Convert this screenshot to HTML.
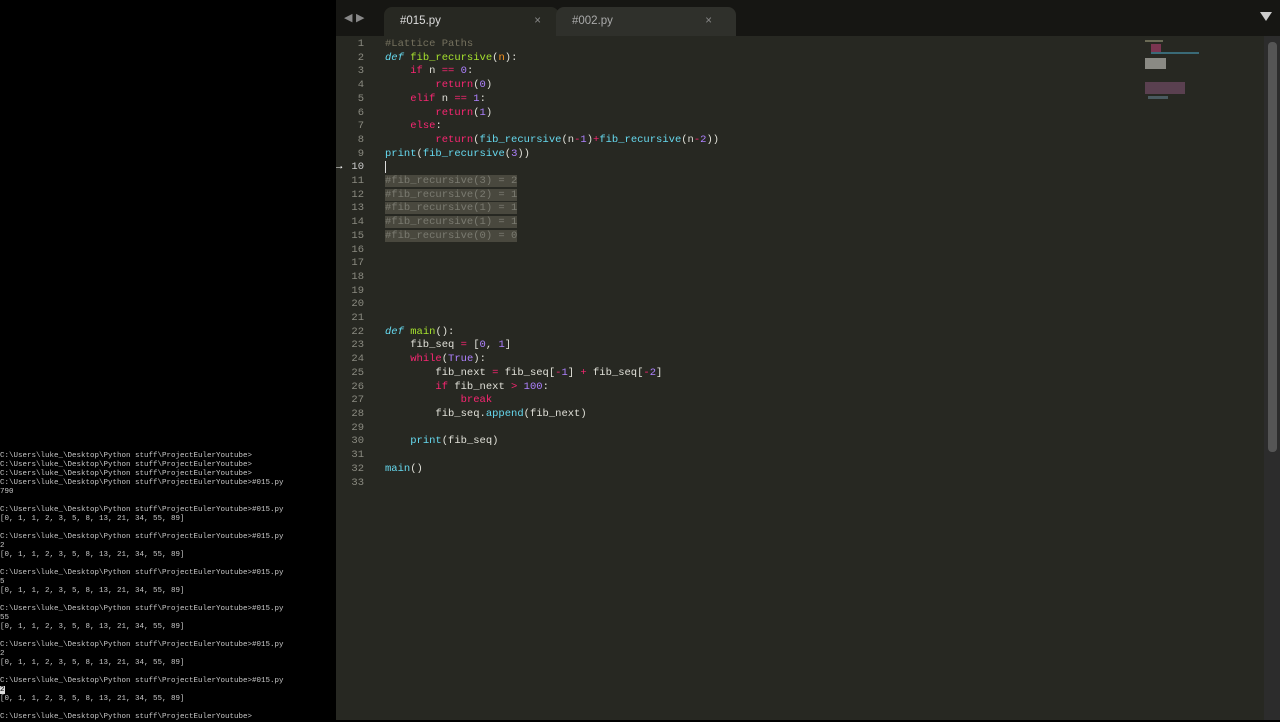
<!DOCTYPE html>
<html><head><style>
*{margin:0;padding:0;box-sizing:border-box}
body{width:1280px;height:720px;background:#000;position:relative;overflow:hidden;font-family:"Liberation Mono",monospace}
#term{position:absolute;left:0;top:452px;width:336px;font-size:7.5px;line-height:9px;color:#c8c8c8;white-space:pre}
#ed{position:absolute;left:336px;top:0;width:944px;height:720px;background:#272822}
#tabbar{position:absolute;left:0;top:0;width:944px;height:36px;background:#161613}
.tab{position:absolute;top:7px;height:29px;border-radius:8px 8px 0 0;font-family:"Liberation Sans",sans-serif;font-size:11.5px;line-height:28px;padding-left:16px}
#code{position:absolute;left:0;top:38px;font-size:10.5px;line-height:13.7px;white-space:pre;color:#e0e0d8}
.ln{display:inline-block;width:28px;text-align:right;color:#8a8a80;margin-right:21px}
.k{color:#f92672}.c{color:#66d9ef}.g{color:#a6e22e}.p{color:#ae81ff}.o{color:#fd971f}.m{color:#75715e}
.cy{color:#66d9ef;font-style:italic}
.sel{background:#49483e;color:#7a7a70}
</style></head><body>
<div id="term">C:\Users\luke_\Desktop\Python stuff\ProjectEulerYoutube>
C:\Users\luke_\Desktop\Python stuff\ProjectEulerYoutube>
C:\Users\luke_\Desktop\Python stuff\ProjectEulerYoutube>
C:\Users\luke_\Desktop\Python stuff\ProjectEulerYoutube>#015.py
790

C:\Users\luke_\Desktop\Python stuff\ProjectEulerYoutube>#015.py
[0, 1, 1, 2, 3, 5, 8, 13, 21, 34, 55, 89]

C:\Users\luke_\Desktop\Python stuff\ProjectEulerYoutube>#015.py
2
[0, 1, 1, 2, 3, 5, 8, 13, 21, 34, 55, 89]

C:\Users\luke_\Desktop\Python stuff\ProjectEulerYoutube>#015.py
5
[0, 1, 1, 2, 3, 5, 8, 13, 21, 34, 55, 89]

C:\Users\luke_\Desktop\Python stuff\ProjectEulerYoutube>#015.py
55
[0, 1, 1, 2, 3, 5, 8, 13, 21, 34, 55, 89]

C:\Users\luke_\Desktop\Python stuff\ProjectEulerYoutube>#015.py
2
[0, 1, 1, 2, 3, 5, 8, 13, 21, 34, 55, 89]

C:\Users\luke_\Desktop\Python stuff\ProjectEulerYoutube>#015.py
<span style="background:#ddd;color:#000">2</span>
[0, 1, 1, 2, 3, 5, 8, 13, 21, 34, 55, 89]

C:\Users\luke_\Desktop\Python stuff\ProjectEulerYoutube></div>
<div id="ed">
<div id="tabbar">
<div style="position:absolute;left:8px;top:11px;color:#888;font-size:11px;font-family:'DejaVu Sans',sans-serif">◀ ▶</div>
<div class="tab" style="left:48px;width:175px;background:#272822;color:#ddd">#015.py<span style="position:absolute;right:18px;color:#888">×</span></div>
<div class="tab" style="left:220px;width:180px;background:#2f302b;color:#aaa;padding-left:16px">#002.py<span style="position:absolute;right:24px;color:#888">×</span></div>
<div style="position:absolute;right:8px;top:12px;width:0;height:0;border-left:6px solid transparent;border-right:6px solid transparent;border-top:9px solid #ccc"></div>
</div>
<div id="code"><span class="ln">1</span><span class="m">#Lattice Paths</span>
<span class="ln">2</span><span class="cy">def</span> <span class="g">fib_recursive</span>(<span class="o">n</span>):
<span class="ln">3</span>    <span class="k">if</span> n <span class="k">==</span> <span class="p">0</span>:
<span class="ln">4</span>        <span class="k">return</span>(<span class="p">0</span>)
<span class="ln">5</span>    <span class="k">elif</span> n <span class="k">==</span> <span class="p">1</span>:
<span class="ln">6</span>        <span class="k">return</span>(<span class="p">1</span>)
<span class="ln">7</span>    <span class="k">else</span>:
<span class="ln">8</span>        <span class="k">return</span>(<span class="c">fib_recursive</span>(n<span class="k">-</span><span class="p">1</span>)<span class="k">+</span><span class="c">fib_recursive</span>(n<span class="k">-</span><span class="p">2</span>))
<span class="ln">9</span><span class="c">print</span>(<span class="c">fib_recursive</span>(<span class="p">3</span>))
<span style="position:absolute;left:0;width:48px;background:transparent"><span style="color:#fff">→</span></span><span class="ln" style="color:#ccc">10</span><span style="border-left:1px solid #ddd"></span>
<span class="ln">11</span><span class="sel">#fib_recursive(3) = 2</span>
<span class="ln">12</span><span class="sel">#fib_recursive(2) = 1</span>
<span class="ln">13</span><span class="sel">#fib_recursive(1) = 1</span>
<span class="ln">14</span><span class="sel">#fib_recursive(1) = 1</span>
<span class="ln">15</span><span class="sel">#fib_recursive(0) = 0</span>
<span class="ln">16</span>
<span class="ln">17</span>
<span class="ln">18</span>
<span class="ln">19</span>
<span class="ln">20</span>
<span class="ln">21</span>
<span class="ln">22</span><span class="cy">def</span> <span class="g">main</span>():
<span class="ln">23</span>    fib_seq <span class="k">=</span> [<span class="p">0</span>, <span class="p">1</span>]
<span class="ln">24</span>    <span class="k">while</span>(<span class="p">True</span>):
<span class="ln">25</span>        fib_next <span class="k">=</span> fib_seq[<span class="k">-</span><span class="p">1</span>] <span class="k">+</span> fib_seq[<span class="k">-</span><span class="p">2</span>]
<span class="ln">26</span>        <span class="k">if</span> fib_next <span class="k">&gt;</span> <span class="p">100</span>:
<span class="ln">27</span>            <span class="k">break</span>
<span class="ln">28</span>        fib_seq.<span class="c">append</span>(fib_next)
<span class="ln">29</span>
<span class="ln">30</span>    <span class="c">print</span>(fib_seq)
<span class="ln">31</span>
<span class="ln">32</span><span class="c">main</span>()
<span class="ln">33</span></div>
<div style="position:absolute;left:809px;top:40px;width:18px;height:2px;background:#6a6a55"></div>
<div style="position:absolute;left:815px;top:44px;width:10px;height:8px;background:#7a3550"></div>
<div style="position:absolute;left:815px;top:52px;width:48px;height:2px;background:#3a6a77"></div>
<div style="position:absolute;left:809px;top:58px;width:21px;height:11px;background:#8a8a84"></div>
<div style="position:absolute;left:809px;top:82px;width:40px;height:12px;background:#5a4050"></div>
<div style="position:absolute;left:812px;top:96px;width:20px;height:3px;background:#4a5a60"></div>
<div style="position:absolute;left:928px;top:36px;width:16px;height:684px;background:#2c2c2c"></div>
<div style="position:absolute;left:932px;top:42px;width:9px;height:410px;background:#555;border-radius:4px"></div>
</div>
</body></html>
